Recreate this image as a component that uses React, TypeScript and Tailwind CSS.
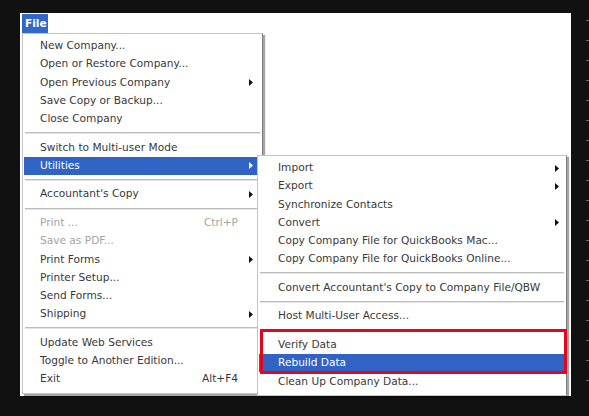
import React from "react";

type Item =
  | { sep: true }
  | {
      sep?: false;
      label: string;
      shortcut?: string;
      arrow?: boolean;
      disabled?: boolean;
      active?: boolean;
    };

const fileItems: Item[] = [
  { label: "New Company..." },
  { label: "Open or Restore Company..." },
  { label: "Open Previous Company", arrow: true },
  { label: "Save Copy or Backup..." },
  { label: "Close Company" },
  { sep: true },
  { label: "Switch to Multi-user Mode" },
  { label: "Utilities", arrow: true, active: true },
  { sep: true },
  { label: "Accountant's Copy", arrow: true },
  { sep: true },
  { label: "Print ...", shortcut: "Ctrl+P", disabled: true },
  { label: "Save as PDF...", disabled: true },
  { label: "Print Forms", arrow: true },
  { label: "Printer Setup..." },
  { label: "Send Forms..." },
  { label: "Shipping", arrow: true },
  { sep: true },
  { label: "Update Web Services" },
  { label: "Toggle to Another Edition..." },
  { label: "Exit", shortcut: "Alt+F4" },
];

const utilityItems: Item[] = [
  { label: "Import", arrow: true },
  { label: "Export", arrow: true },
  { label: "Synchronize Contacts" },
  { label: "Convert", arrow: true },
  { label: "Copy Company File for QuickBooks Mac..." },
  { label: "Copy Company File for QuickBooks Online..." },
  { sep: true },
  { label: "Convert Accountant's Copy to Company File/QBW" },
  { sep: true },
  { label: "Host Multi-User Access..." },
  { sep: true },
  { label: "Verify Data" },
  { label: "Rebuild Data", active: true },
  { label: "Clean Up Company Data..." },
];

function Arrow({ white }: { white?: boolean }) {
  return (
    <svg width="4" height="7" viewBox="0 0 4 7" className="shrink-0">
      <path d="M0 0 L4 3.5 L0 7 Z" fill={white ? "#ffffff" : "#111111"} />
    </svg>
  );
}

function MenuList({
  items,
  padLeft,
  padRight,
}: {
  items: Item[];
  padLeft: string;
  padRight: string;
}) {
  return (
    <>
      {items.map((item, i) => {
        if (item.sep) {
          return (
            <div key={i} className="h-[10.5px] flex flex-col justify-center mx-[2px]">
              <div className="h-px bg-[#bdbdbd]" />
              <div className="h-px bg-[#e4e4e4]" />
            </div>
          );
        }
        const color = item.active
          ? "text-white bg-[#3163c4]"
          : item.disabled
          ? "text-[#a3a3a3]"
          : "text-[#383838]";
        return (
          <div
            key={i}
            className={`flex items-center h-[18.2px] mx-[1px] ${padLeft} ${padRight} ${color}`}
          >
            <span className="flex-1 whitespace-nowrap">{item.label}</span>
            {item.shortcut && (
              <span className="mr-[11px] whitespace-nowrap">{item.shortcut}</span>
            )}
            {item.arrow ? <Arrow white={item.active} /> : <span className="w-[4px]" />}
          </div>
        );
      })}
    </>
  );
}

export default function App() {
  return (
    <div
      className="w-[589px] h-[416px] bg-[#111111] flex overflow-hidden text-[10.6px]"
      style={{ fontFamily: '"DejaVu Sans", Verdana, sans-serif' }}
    >
      <div className="w-[20px] shrink-0" />
      <div className="mt-[13px] w-[551px] h-[383px] bg-white relative shrink-0">
        <div className="ml-[2px] mt-[1px] h-[19px] w-[26px] bg-[#3267c8] text-white font-bold flex items-center pl-[3px]">
          File
        </div>
        <div className="ml-[2px] w-[241px] border border-[#c4c4c4] border-r-[#7d7d7d] bg-white pt-[3px] pb-[5px] shadow-[2px_2px_1px_rgba(0,0,0,0.35)]">
          <MenuList items={fileItems} padLeft="pl-[16px]" padRight="pr-[8px]" />
        </div>

        <div className="absolute left-[237px] top-[142px] w-[310px] border border-[#c4c4c4] border-r-[#7d7d7d] bg-white pt-[3px] pb-[4px] shadow-[2px_2px_1px_rgba(0,0,0,0.35)]">
          <MenuList items={utilityItems} padLeft="pl-[19px]" padRight="pr-[6px]" />
        </div>

        <div className="absolute left-[240px] top-[316px] w-[307px] h-[45px] border-[3px] border-[#e2081b]" />
      </div>
      <div className="flex-1 flex flex-col items-end pt-[20px] gap-[19px]">
        {Array.from({ length: 19 }).map((_, i) => (
          <div key={i} className="w-[3px] h-px bg-[#6a6a6a]" />
        ))}
      </div>
    </div>
  );
}
